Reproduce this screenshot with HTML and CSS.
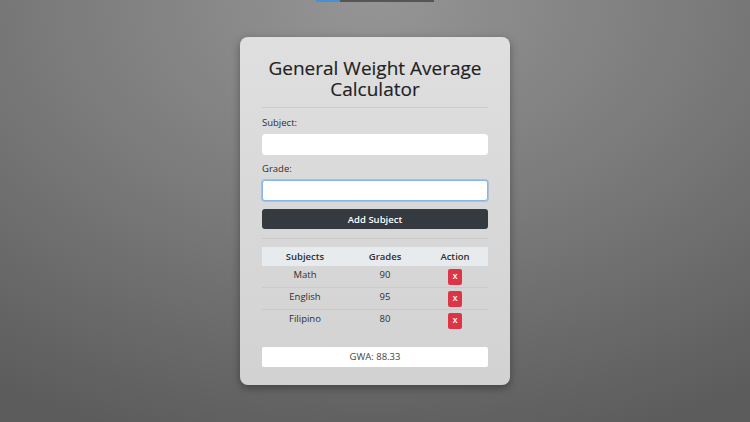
FILE: index.html
```html
<!DOCTYPE html>
<html lang="en">
<head>
<meta charset="utf-8">
<title>General Weight Average Calculator</title>
<link rel="stylesheet" href="styles.css">
</head>
<body>
<div class="topbar"><span class="topbar-fill"></span></div>
<main class="card">
  <h1 class="title">General Weight Average Calculator</h1>
  <hr class="divider">
  <label class="field-label" for="subject">Subject:</label>
  <input class="field-input" id="subject" type="text">
  <label class="field-label" for="grade">Grade:</label>
  <input class="field-input is-focused" id="grade" type="number">
  <button class="add-btn" type="button">Add Subject</button>
  <hr class="divider divider-lower">
  <table class="grades">
    <thead>
      <tr><th class="col-subject">Subjects</th><th class="col-grade">Grades</th><th class="col-action">Action</th></tr>
    </thead>
    <tbody>
      <tr><td>Math</td><td>90</td><td><button class="del-btn" type="button">X</button></td></tr>
      <tr><td>English</td><td>95</td><td><button class="del-btn" type="button">X</button></td></tr>
      <tr><td>Filipino</td><td>80</td><td><button class="del-btn" type="button">X</button></td></tr>
    </tbody>
  </table>
  <div class="gwa">GWA: 88.33</div>
</main>
</body>
</html>
```
FILE: styles.css
```css
html, body {
  margin: 0;
  height: 100%;
}
body {
  background: radial-gradient(ellipse 90% 110% at 50% 0%, #959595 0%, #7a7a7a 50%, #5c5c5c 100%);
  font-family: "Open Sans", "Noto Sans", sans-serif;
  color: #333;
  overflow: hidden;
}
.topbar {
  position: absolute;
  top: 0;
  left: 316px;
  width: 118px;
  height: 2px;
  background: #555;
}
.topbar-fill {
  display: block;
  width: 24px;
  height: 100%;
  background: #4a8fd4;
}
.card {
  width: 226px;
  margin: 37px auto 0;
  padding: 20px 22px 18px;
  background: linear-gradient(180deg, #dfdfdf 0%, #d2d2d2 100%);
  border-radius: 8px;
  box-shadow: 0 3px 8px rgba(0, 0, 0, 0.35);
  display: flex;
  flex-direction: column;
}
.title {
  margin: 0;
  padding-top: 1px;
  font-size: 19px;
  line-height: 21px;
  font-weight: 400;
  text-align: center;
  color: #222;
  -webkit-text-stroke: 0.15px #222;
}
.divider {
  border: 0;
  border-top: 1px solid rgba(0, 0, 0, 0.07);
  margin: 7px 0 8px;
  width: 100%;
}
.divider-lower {
  margin: 9px 0 8px;
}
.field-label {
  font-size: 9.5px;
  line-height: 14px;
  color: #2f2f2f;
}
.field-input {
  box-sizing: border-box;
  height: 21px;
  margin: 4px 0 7px;
  border: 1px solid #fff;
  border-radius: 3px;
  background: #fff;
  outline: none;
  width: 100%;
}
.field-input.is-focused {
  border-color: #86b7e8;
  box-shadow: 0 0 0 1px rgba(80, 150, 230, 0.35);
  margin-bottom: 8px;
}
.add-btn {
  height: 20px;
  border: 0;
  border-radius: 3px;
  background: #343a40;
  color: #fff;
  font-family: inherit;
  font-size: 9.5px;
  font-weight: 600;
  padding: 0;
}
.grades {
  width: 100%;
  border-collapse: collapse;
  font-size: 9.5px;
  color: #2f2f2f;
}
.grades th {
  background: #e8ebee;
  height: 19px;
  padding: 0;
  font-weight: 600;
  text-align: center;
}
.col-subject { width: 86px; }
.col-grade { width: 74px; }
.col-action { width: 66px; }
.grades td {
  height: 21px;
  padding: 0;
  text-align: center;
  vertical-align: top;
  line-height: 18px;
  border-bottom: 1px solid rgba(0, 0, 0, 0.05);
}
.grades tbody tr:last-child td {
  border-bottom: 0;
  height: 22px;
}
.del-btn {
  width: 14px;
  height: 16px;
  margin-top: 3px;
  padding: 0;
  border: 0;
  border-radius: 2px;
  background: #dc3545;
  color: #fff;
  font-family: inherit;
  font-size: 7px;
  font-weight: 700;
  line-height: 16px;
  vertical-align: top;
}
.gwa {
  margin-top: 15px;
  height: 20px;
  line-height: 20px;
  background: #fff;
  border-radius: 2px;
  text-align: center;
  font-size: 9.5px;
  color: #444;
}
```
